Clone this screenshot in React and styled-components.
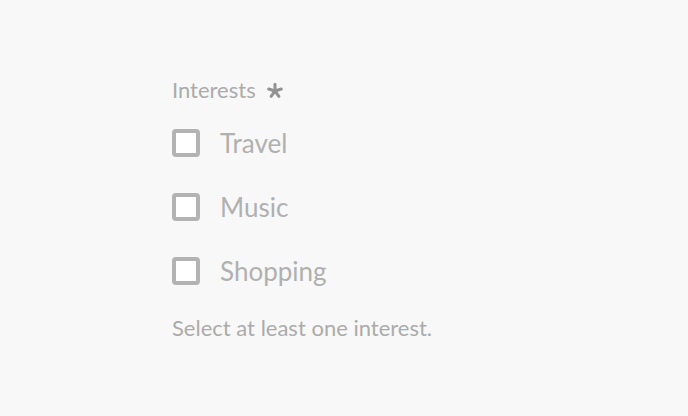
import React from "react";
import styled, { createGlobalStyle } from "styled-components";

const GlobalStyle = createGlobalStyle`
  html, body {
    margin: 0;
    padding: 0;
    background: #f8f8f8;
    font-family: "Lato", "Open Sans", sans-serif;
  }
`;

const Page = styled.div`
  width: 688px;
  height: 416px;
  background: #f8f8f8;
  box-sizing: border-box;
  padding: 74px 0 0 172px;
`;

const Group = styled.div`
  display: flex;
  flex-direction: column;
`;

const Label = styled.div`
  display: flex;
  align-items: center;
  gap: 11px;
  height: 30px;
  font-size: 22px;
  color: #ababab;
`;

const Options = styled.div`
  display: flex;
  flex-direction: column;
  gap: 22px;
  margin-top: 18px;
`;

const Option = styled.label`
  display: flex;
  align-items: center;
  gap: 20px;
  height: 42px;
  font-size: 26px;
  color: #b0b0b0;
`;

const Box = styled.span`
  width: 28px;
  height: 28px;
  box-sizing: border-box;
  border: 4px solid #b3b3b3;
  border-radius: 4px;
  background: #ffffff;
  flex-shrink: 0;
`;

const Help = styled.div`
  margin-top: 22px;
  font-size: 22px;
  color: #ababab;
`;

function Asterisk() {
  const arms = [0, 72, 144, 216, 288];
  return (
    <svg width="16" height="16" viewBox="-8 -8 16 16" style={{ marginTop: 3 }}>
      {arms.map((a) => (
        <line
          key={a}
          x1="0"
          y1="0"
          x2={6.6 * Math.sin((a * Math.PI) / 180)}
          y2={-6.6 * Math.cos((a * Math.PI) / 180)}
          stroke="#929292"
          strokeWidth="3"
          strokeLinecap="round"
        />
      ))}
    </svg>
  );
}

const interests = ["Travel", "Music", "Shopping"];

export default function App() {
  return (
    <Page>
      <GlobalStyle />
      <Group>
        <Label>
          Interests <Asterisk />
        </Label>
        <Options>
          {interests.map((name) => (
            <Option key={name}>
              <Box />
              {name}
            </Option>
          ))}
        </Options>
        <Help>Select at least one interest.</Help>
      </Group>
    </Page>
  );
}
